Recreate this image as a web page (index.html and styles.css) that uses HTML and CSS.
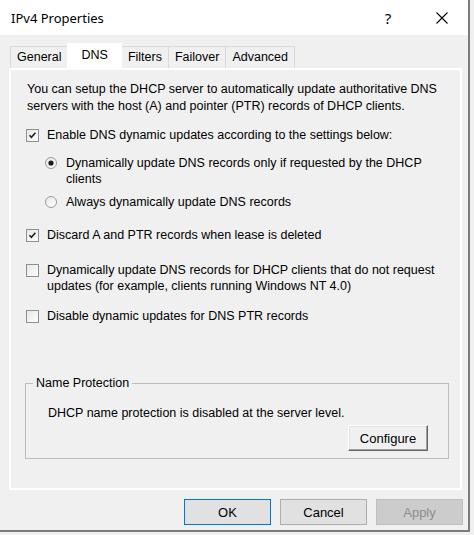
FILE: index.html
```html
<!DOCTYPE html>
<html>
<head>
<meta charset="utf-8">
<title>IPv4 Properties</title>
<link rel="stylesheet" href="styles.css">
</head>
<body>
<div class="window">
  <div class="titlebar">
    <span class="title">IPv4 Properties</span>
    <span class="help">?</span>
    <span class="close"><svg width="12" height="12" viewBox="0 0 12 12"><path d="M0.5 0.5L11.5 11.5M11.5 0.5L0.5 11.5" stroke="#000" stroke-width="1.1" fill="none"/></svg></span>
  </div>
  <div class="content">
    <div class="tabs">
      <div class="tab">General</div>
      <div class="tab active">DNS</div>
      <div class="tab">Filters</div>
      <div class="tab">Failover</div>
      <div class="tab">Advanced</div>
    </div>
    <div class="panel">
      <p class="intro">You can setup the DHCP server to automatically update authoritative DNS<br>servers with the host (A) and pointer (PTR) records of DHCP clients.</p>

      <div class="opt opt-enable">
        <svg class="box" width="13" height="13" viewBox="0 0 13 13"><defs><linearGradient id="g1" x1="0" y1="0" x2="1" y2="1"><stop offset="0" stop-color="#e6e6e6"/><stop offset="1" stop-color="#ffffff"/></linearGradient></defs><rect x="0.5" y="0.5" width="12" height="12" fill="url(#g1)" stroke="#8e8f8f"/><path d="M3.5 6.3L5.4 8.3L9.4 3.8" stroke="#222" stroke-width="1.6" fill="none"/></svg>
        <span>Enable DNS dynamic updates according to the settings below:</span>
      </div>

      <div class="opt radio opt-r1">
        <svg class="dot" width="12" height="12" viewBox="0 0 12 12"><circle cx="6" cy="6" r="5.5" fill="url(#g1)" stroke="#9a9a9a"/><circle cx="6" cy="6" r="2.6" fill="#1a1a1a"/></svg>
        <span>Dynamically update DNS records only if requested by the DHCP<br>clients</span>
      </div>

      <div class="opt radio opt-r2">
        <svg class="dot" width="12" height="12" viewBox="0 0 12 12"><circle cx="6" cy="6" r="5.5" fill="url(#g1)" stroke="#9a9a9a"/></svg>
        <span>Always dynamically update DNS records</span>
      </div>

      <div class="opt opt-discard">
        <svg class="box" width="13" height="13" viewBox="0 0 13 13"><rect x="0.5" y="0.5" width="12" height="12" fill="url(#g1)" stroke="#8e8f8f"/><path d="M3.5 6.3L5.4 8.3L9.4 3.8" stroke="#222" stroke-width="1.6" fill="none"/></svg>
        <span>Discard A and PTR records when lease is deleted</span>
      </div>

      <div class="opt opt-legacy">
        <svg class="box" width="13" height="13" viewBox="0 0 13 13"><rect x="0.5" y="0.5" width="12" height="12" fill="url(#g1)" stroke="#8e8f8f"/></svg>
        <span>Dynamically update DNS records for DHCP clients that do not request<br>updates (for example, clients running Windows NT 4.0)</span>
      </div>

      <div class="opt opt-ptr">
        <svg class="box" width="13" height="13" viewBox="0 0 13 13"><rect x="0.5" y="0.5" width="12" height="12" fill="url(#g1)" stroke="#8e8f8f"/></svg>
        <span>Disable dynamic updates for DNS PTR records</span>
      </div>

      <fieldset class="group">
        <legend>Name Protection</legend>
        <div class="group-body">
          <p class="group-text">DHCP name protection is disabled at the server level.</p>
          <div class="group-actions"><button class="btn3d">Configure</button></div>
        </div>
      </fieldset>
    </div>
    <div class="actions">
      <button class="btn default">OK</button>
      <button class="btn">Cancel</button>
      <button class="btn disabled">Apply</button>
    </div>
  </div>
</div>
</body>
</html>
```
FILE: styles.css
```css
* { box-sizing: border-box; }

body {
  margin: 0;
  background: #f0f0f0;
  font-family: "Liberation Sans", Arial, sans-serif;
  font-size: 12.5px;
  color: #000;
}

.window {
  width: 470px;
  height: 532px;
  background: #f0f0f0;
  border-right: 2px solid #7c7c7c;
  border-bottom: 2px solid #7c7c7c;
  display: flex;
  flex-direction: column;
}

.titlebar {
  height: 35px;
  background: #fff;
  display: flex;
  align-items: center;
  padding-left: 11px;
  flex-shrink: 0;
}

.title {
  flex: 1;
  font-family: "Noto Sans", "Open Sans", sans-serif;
  font-size: 13px;
  color: #000;
}

.help {
  width: 20px;
  text-align: center;
  font-family: "Noto Sans", sans-serif;
  font-size: 15px;
  margin-right: 38px;
}

.close {
  width: 12px;
  height: 12px;
  display: flex;
  margin-right: 20px;
}

.content {
  flex: 1;
  display: flex;
  flex-direction: column;
  padding-top: 8px;
}

.tabs {
  display: flex;
  align-items: flex-end;
  margin-left: 10px;
  height: 25px;
}

.tab {
  height: 22px;
  line-height: 20px;
  padding: 0 6px;
  background: #f0f0f0;
  border: 1px solid #dadada;
  border-bottom: 0;
  margin-left: -1px;
}

.tab:first-child { margin-left: 0; }

.tab.active {
  height: 27px;
  line-height: 22px;
  padding: 0 13px 0 13px;
  background: #fff;
  border-color: #fff;
  margin-bottom: -2px;
  z-index: 2;
}

.panel {
  margin-left: 9px;
  width: 453px;
  height: 422px;
  border: 2px solid #fff;
  padding: 11px 8px 0 15px;
  display: flex;
  flex-direction: column;
}

.intro {
  margin: 0 0 0 1px;
  line-height: 17px;
  white-space: nowrap;
}

.opt {
  display: flex;
  align-items: flex-start;
  line-height: 16px;
  white-space: nowrap;
}

.opt .box {
  flex-shrink: 0;
  margin-top: 2px;
  margin-right: 8px;
}

.opt.radio { padding-left: 19px; }

.opt .dot {
  flex-shrink: 0;
  margin-top: 2px;
  margin-right: 9px;
}

.opt-enable { margin-top: 12px; }
.opt-r1 { margin-top: 12px; }
.opt-r2 { margin-top: 7px; }
.opt-discard { margin-top: 17px; }
.opt-legacy { margin-top: 19px; }
.opt-ptr { margin-top: 14px; }

.group {
  margin: 51px 0 0 -1px;
  width: 424px;
  padding: 0;
  border: 1px solid #bdbdbd;
  min-width: 0;
}

.group legend {
  margin-left: 7px;
  padding: 0 3px;
  line-height: 16px;
}

.group-body {
  padding: 14px 20px 7px 22px;
}

.group-text {
  margin: 0;
  line-height: 16px;
}

.group-actions {
  display: flex;
  justify-content: flex-end;
  margin-top: 4px;
}

.btn3d {
  width: 80px;
  height: 26px;
  font: inherit;
  font-size: 13px;
  color: #000;
  background: #f0f0f0;
  border: 1px solid;
  border-color: #ffffff #646464 #646464 #ffffff;
  box-shadow: inset -1px -1px 0 #a0a0a0, inset 1px 1px 0 #e3e3e3;
  padding: 0;
}

.actions {
  display: flex;
  justify-content: flex-end;
  gap: 9px;
  margin-top: 9px;
  padding-right: 5px;
}

.btn {
  width: 87px;
  height: 26px;
  font: inherit;
  font-size: 13px;
  color: #000;
  background: #e1e1e1;
  border: 1px solid #adadad;
  padding: 0;
}

.btn.default { border-color: #0078d7; }

.btn.disabled {
  background: #cccccc;
  border-color: #bfbfbf;
  color: #8c8c8c;
}
```
